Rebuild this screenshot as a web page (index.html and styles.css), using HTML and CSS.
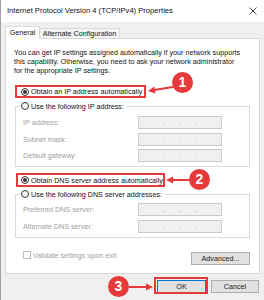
FILE: index.html
```html
<!DOCTYPE html>
<html>
<head>
<meta charset="utf-8">
<link rel="stylesheet" href="styles.css">
</head>
<body>
<div class="window">
  <div class="titlebar">
    <span class="title">Internet Protocol Version 4 (TCP/IPv4) Properties</span>
    <svg class="close" width="8" height="8" viewBox="0 0 8 8"><path d="M0.5 0.5 L7.5 7.5 M7.5 0.5 L0.5 7.5" stroke="#333" stroke-width="0.9" fill="none"/></svg>
  </div>
  <div class="tabs">
    <div class="tab tab-general active">General</div>
    <div class="tab tab-alt">Alternate Configuration</div>
  </div>
  <div class="panel">
    <p class="desc">You can get IP settings assigned automatically if your network supports<br>this capability. Otherwise, you need to ask your network administrator<br>for the appropriate IP settings.</p>
    <div class="radio-row first"><span class="radio checked"></span><span>Obtain an IP address automatically</span></div>
    <fieldset class="group g1">
      <legend class="radio-row"><span class="radio"></span><span>Use the following IP address:</span></legend>
      <div class="field"><span>IP address:</span><span class="ipbox"><i></i><b>.</b><i></i><b>.</b><i></i><b>.</b><i></i></span></div>
      <div class="field"><span>Subnet mask:</span><span class="ipbox"><i></i><b>.</b><i></i><b>.</b><i></i><b>.</b><i></i></span></div>
      <div class="field"><span>Default gateway:</span><span class="ipbox"><i></i><b>.</b><i></i><b>.</b><i></i><b>.</b><i></i></span></div>
    </fieldset>
    <div class="radio-row second"><span class="radio checked"></span><span>Obtain DNS server address automatically</span></div>
    <fieldset class="group g2">
      <legend class="radio-row"><span class="radio"></span><span>Use the following DNS server addresses:</span></legend>
      <div class="field"><span>Preferred DNS server:</span><span class="ipbox"><i></i><b>.</b><i></i><b>.</b><i></i><b>.</b><i></i></span></div>
      <div class="field"><span>Alternate DNS server:</span><span class="ipbox"><i></i><b>.</b><i></i><b>.</b><i></i><b>.</b><i></i></span></div>
    </fieldset>
    <div class="bottom-row">
      <label class="check"><span class="box"></span><span>Validate settings upon exit</span></label>
      <span class="btn adv">Advanced...</span>
    </div>
  </div>
  <div class="buttons">
    <span class="btn ok">OK</span>
    <span class="btn cancel">Cancel</span>
  </div>
</div>

<svg class="marks" width="264" height="300" viewBox="0 0 264 300">
  <g fill="none" stroke="#e63a3a" stroke-width="2">
    <rect x="16" y="86" width="129" height="11"/>
    <rect x="17" y="174" width="147" height="12"/>
    <rect x="155" y="278" width="52" height="15"/>
    <line x1="173" y1="87" x2="154" y2="90"/>
    <line x1="190" y1="180" x2="172" y2="180"/>
    <line x1="129" y1="287" x2="147" y2="287"/>
  </g>
  <g fill="#e63a3a">
    <polygon points="148,91 155.5,93.4 154.3,86.4"/>
    <polygon points="166,180 173,176.5 173,183.5"/>
    <polygon points="153,287 146,283.5 146,290.5"/>
  </g>
</svg>
<div class="badge b1">1</div>
<div class="badge b2">2</div>
<div class="badge b3">3</div>
</body>
</html>
```
FILE: styles.css
```css
* { box-sizing: border-box; }
html, body { margin: 0; padding: 0; }
body {
  width: 264px;
  height: 300px;
  overflow: hidden;
  background: #f0f0f0;
  font-family: "Liberation Sans", Arial, sans-serif;
  font-size: 7.2px;
  color: #141414;
  position: relative;
}
.window {
  height: 300px;
  border-left: 1px solid #a0a0a0;
  display: flex;
  flex-direction: column;
}
.titlebar {
  height: 22px;
  background: #fff;
  display: flex;
  align-items: center;
  justify-content: space-between;
  padding: 0 7px 1px 6px;
}
.title { font-size: 7.6px; color: #111; white-space: nowrap; }
.close { display: block; }
.tabs {
  display: flex;
  align-items: flex-end;
  height: 12px;
  margin-top: 4px;
  padding-left: 4px;
}
.tab {
  height: 10px;
  border: 1px solid #d9d9d9;
  border-bottom: none;
  background: #f3f3f3;
  line-height: 9px;
  text-align: center;
  white-space: nowrap;
}
.tab-general { width: 35px; }
.tab-alt { width: 80px; border-left: none; }
.tab.active {
  height: 13px;
  line-height: 11px;
  background: #fff;
  margin-bottom: -1px;
  position: relative;
  z-index: 1;
}
.panel {
  margin: 0 4px 0 4px;
  height: 236px;
  background: #fff;
  border: 1px solid #d9d9d9;
  padding: 9px 9px 0 8px;
  display: flex;
  flex-direction: column;
}
.desc {
  margin: 0;
  line-height: 9px;
  white-space: nowrap;
}
.radio-row {
  display: flex;
  align-items: center;
  gap: 2px;
  white-space: nowrap;
}
.radio-row.first { height: 13px; margin: 10px 0 0 1px; padding-left: 6px; }
.radio-row.second { height: 14px; margin: 6px 0 0 1px; padding-left: 6px; }
.radio {
  width: 8px;
  height: 8px;
  border: 1px solid #333;
  border-radius: 50%;
  background: #fff;
  display: flex;
  align-items: center;
  justify-content: center;
  flex: none;
}
.radio.checked::after {
  content: "";
  width: 4px;
  height: 4px;
  border-radius: 50%;
  background: #333;
}
.group {
  margin: 0 0 0 1px;
  border: 1px solid #dcdcdc;
  padding: 4px 0 4px 0;
  min-width: 0;
  display: flex;
  flex-direction: column;
}
.group legend {
  height: 12px;
  padding: 0 2px 0 0;
  margin-left: 5px;
}
.g1 { margin-top: 2px; gap: 3.5px; }
.g2 { margin-top: 1px; padding-top: 3px; gap: 4px; }
.field {
  height: 13px;
  display: flex;
  align-items: center;
  justify-content: space-between;
  padding: 0 27px 0 7px;
  color: #a0a0a0;
  white-space: nowrap;
}
.ipbox {
  width: 84px;
  height: 13px;
  border: 1px solid #cacaca;
  background: #f0f0f0;
  display: flex;
  align-items: center;
  padding: 0 10px;
}
.ipbox i { flex: 1; }
.ipbox b { font-weight: normal; color: #999; font-size: 7px; line-height: 7px; }
.bottom-row {
  margin-top: 13px;
  display: flex;
  align-items: flex-start;
  justify-content: space-between;
}
.check {
  display: flex;
  align-items: center;
  gap: 2px;
  height: 8px;
  margin-left: 9px;
  color: #a0a0a0;
  white-space: nowrap;
}
.box {
  width: 8px;
  height: 8px;
  border: 1px solid #bcbcbc;
  background: #fff;
}
.btn {
  display: flex;
  align-items: center;
  justify-content: center;
  height: 13px;
  background: #e1e1e1;
  border: 1px solid #adadad;
  color: #1a1a1a;
  white-space: nowrap;
}
.adv { width: 59px; margin-top: 1px; }
.buttons {
  display: flex;
  justify-content: flex-end;
  gap: 5px;
  margin-top: 6px;
  padding-right: 5px;
}
.ok { width: 49px; border-color: #0078d7; }
.cancel { width: 48px; }
.marks {
  position: absolute;
  left: 0;
  top: 0;
}
.badge {
  position: absolute;
  width: 21px;
  height: 21px;
  border-radius: 50%;
  background: #e63a3a;
  color: #fff;
  font-family: "Liberation Sans", Arial, sans-serif;
  font-weight: bold;
  font-size: 14px;
  line-height: 21px;
  text-align: center;
}
.b1 { left: 172px; top: 72px; }
.b2 { left: 189px; top: 169px; }
.b3 { left: 108px; top: 276px; }
```
